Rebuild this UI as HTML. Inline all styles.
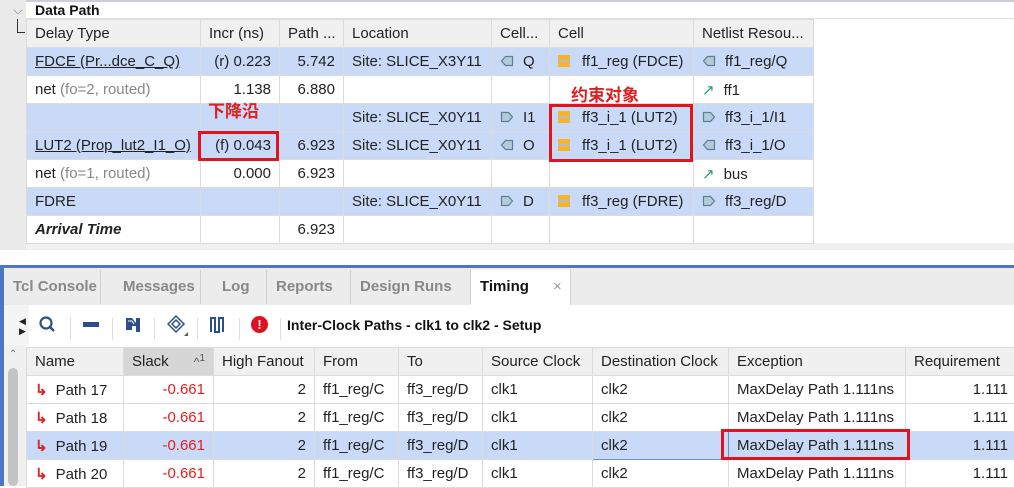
<!DOCTYPE html>
<html><head><style>
*{margin:0;padding:0;box-sizing:border-box}
body{width:1014px;height:486px;overflow:hidden;background:#fff;font-family:"Liberation Sans",Arial,sans-serif;font-size:15px;color:#222;position:relative}
.a{position:absolute}
table{border-collapse:collapse;position:absolute;table-layout:fixed}
td,th{border:1px solid #dcdcdc;height:28px;padding:0 8px;white-space:nowrap;overflow:hidden;font-weight:normal;text-align:left}
th{background:#f0f0f0}
.r{text-align:right}
.b td{background:#c9daf8}
.g{color:#888}
u{text-decoration:underline}
.pi{display:inline-block;vertical-align:-2px;margin-right:9px}
.ar{display:inline-block;color:#2a9a6a;margin-right:9px}
.lut{display:inline-block;width:12px;height:12px;background:linear-gradient(#f5b42a 0 40%,#bbb 40% 60%,#f5b42a 60%);vertical-align:-1px;margin-right:12px}
.red{color:#e02020}
.box{position:absolute;border:3px solid #e0141e}
.tab{position:absolute;top:270px;height:34px;line-height:34px;color:#888;font-weight:bold;font-size:15px;padding-left:9px;border-right:1px solid #d0d0d0}
.sep{position:absolute;top:318px;width:1px;height:22px;background:#ddd}
</style></head><body>
<svg width="0" height="0" style="position:absolute"><defs>
<symbol id="pin" viewBox="0 0 14 14"><path d="M1.5 2.5h7l4 4.5-4 4.5h-7z" fill="#b3cbd8" stroke="#5f7f90" stroke-width="1.2"/></symbol>
<symbol id="pout" viewBox="0 0 14 14"><path d="M12.5 2.5h-7l-4 4.5 4 4.5h7z" fill="#b3cbd8" stroke="#5f7f90" stroke-width="1.2"/></symbol>
</defs></svg>
<!-- top panel -->
<div class="a" style="left:0;top:0;width:1014px;height:250px;background:#f0f0f0"></div>
<div class="a" style="left:0;top:0;width:26px;height:250px;background:#eaeaea"></div>
<div class="a" style="left:26px;top:0;width:988px;height:19px;background:#fff;border-bottom:1px solid #ddd;border-top:2px solid #ccd"></div>
<div class="a" style="left:35px;top:2px;font-weight:bold;font-size:14px;color:#111">Data Path</div>
<div class="a" style="left:14px;top:6px;width:8px;height:8px;border-right:1px solid #999;border-bottom:1px solid #999;transform:rotate(45deg) scale(.8)"></div>
<div class="a" style="left:17px;top:19px;width:8px;height:14px;border-left:1px solid #333;border-bottom:1px solid #333"></div>
<div class="a" style="left:813px;top:19px;width:201px;height:224px;background:#fff"></div>
<div class="a" style="left:26px;top:47px;width:787px;height:196px;background:#fff"></div>
<table style="left:26px;top:19px;width:787px">
<colgroup><col style="width:174px"><col style="width:79px"><col style="width:64px"><col style="width:148px"><col style="width:58px"><col style="width:144px"><col style="width:120px"></colgroup>
<tr><th>Delay Type</th><th>Incr (ns)</th><th>Path ...</th><th>Location</th><th>Cell...</th><th>Cell</th><th>Netlist Resou...</th></tr>
<tr class="b"><td><u>FDCE (Pr...dce_C_Q)</u></td><td class="r">(r) 0.223</td><td class="r">5.742</td><td>Site: SLICE_X3Y11</td><td><svg class="pi" width="14" height="14"><use href="#pout"/></svg>Q</td><td><span class="lut"></span>ff1_reg (FDCE)</td><td><svg class="pi" width="14" height="14"><use href="#pout"/></svg>ff1_reg/Q</td></tr>
<tr><td>net <span class="g">(fo=2, routed)</span></td><td class="r">1.138</td><td class="r">6.880</td><td></td><td></td><td></td><td><span class="ar">&#8599;</span>ff1</td></tr>
<tr class="b"><td></td><td></td><td></td><td>Site: SLICE_X0Y11</td><td><svg class="pi" width="14" height="14"><use href="#pin"/></svg>I1</td><td><span class="lut"></span>ff3_i_1 (LUT2)</td><td><svg class="pi" width="14" height="14"><use href="#pin"/></svg>ff3_i_1/I1</td></tr>
<tr class="b"><td><u>LUT2 (Prop_lut2_I1_O)</u></td><td class="r">(f) 0.043</td><td class="r">6.923</td><td>Site: SLICE_X0Y11</td><td><svg class="pi" width="14" height="14"><use href="#pout"/></svg>O</td><td><span class="lut"></span>ff3_i_1 (LUT2)</td><td><svg class="pi" width="14" height="14"><use href="#pout"/></svg>ff3_i_1/O</td></tr>
<tr><td>net <span class="g">(fo=1, routed)</span></td><td class="r">0.000</td><td class="r">6.923</td><td></td><td></td><td></td><td><span class="ar">&#8599;</span>bus</td></tr>
<tr class="b"><td>FDRE</td><td></td><td></td><td>Site: SLICE_X0Y11</td><td><svg class="pi" width="14" height="14"><use href="#pin"/></svg>D</td><td><span class="lut"></span>ff3_reg (FDRE)</td><td><svg class="pi" width="14" height="14"><use href="#pin"/></svg>ff3_reg/D</td></tr>
<tr><td><b><i>Arrival Time</i></b></td><td></td><td class="r">6.923</td><td></td><td></td><td></td><td></td></tr>
</table>
<div class="a red" style="left:208px;top:99px;font-weight:bold;font-size:17px;font-family:'Noto Sans CJK SC',sans-serif;line-height:22px">下降沿</div>
<div class="a red" style="left:571px;top:83px;font-weight:bold;font-size:17px;font-family:'Noto Sans CJK SC',sans-serif;line-height:22px">约束对象</div>
<div class="box" style="left:198px;top:131px;width:81px;height:30px"></div>
<div class="box" style="left:549px;top:104px;width:144px;height:58px"></div>
<!-- bottom panel -->
<div class="a" style="left:0;top:265px;width:1014px;height:221px;border-top:3px solid #4a78c4;border-left:4px solid #4a78c4"></div>
<div class="a" style="left:4px;top:268px;width:1010px;height:37px;background:#ececec"></div>
<div class="tab" style="left:4px;width:97px">Tcl Console</div>
<div class="tab" style="left:114px;width:87px">Messages</div>
<div class="tab" style="left:213px;width:54px">Log</div>
<div class="tab" style="left:267px;width:84px">Reports</div>
<div class="tab" style="left:351px;width:120px">Design Runs</div>
<div class="tab" style="left:471px;width:100px;background:#fff;color:#111;top:270px;height:35px">Timing <span style="position:absolute;left:82px;color:#999;font-weight:normal">×</span></div>
<div class="a" style="left:4px;top:305px;width:25px;height:40px;background:#f4f4f4"></div>
<div class="a" style="left:19px;top:316px;font-size:9px;line-height:10px">&#9664;<br>&#9654;</div>
<svg class="a" style="left:38px;top:315px" width="20" height="20"><circle cx="8" cy="8" r="5.5" fill="none" stroke="#2a4f8a" stroke-width="2.2"/><line x1="12" y1="12" x2="16" y2="16" stroke="#2a4f8a" stroke-width="2.5"/></svg>
<div class="sep" style="left:70px"></div>
<div class="a" style="left:83px;top:322px;width:16px;height:5px;background:#2a4f8a"></div>
<div class="sep" style="left:112px"></div>
<svg class="a" style="left:125px;top:316px" width="18" height="18"><path d="M1 2h6l4 5v-5h4v14h-4v-6h-4v4h-6z" fill="#2a4f8a"/><path d="M3 5h4l2 3" stroke="#fff" fill="none"/></svg>
<div class="sep" style="left:154px"></div>
<svg class="a" style="left:167px;top:315px" width="22" height="22"><path d="M9 1l8 8-8 8-8-8z M9 5l4 4-4 4-4-4z" fill="none" stroke="#2a4f8a" stroke-width="1.5"/><path d="M21 17v4h-4z" fill="#555"/></svg>
<div class="sep" style="left:197px"></div>
<svg class="a" style="left:209px;top:316px" width="18" height="18"><path d="M2 16V2h4v14h4V2h4v14" fill="none" stroke="#2a4f8a" stroke-width="2"/></svg>
<div class="sep" style="left:239px"></div>
<div class="a" style="left:251px;top:316px;width:17px;height:17px;border-radius:50%;background:#e01020;color:#fff;font-weight:bold;font-size:13px;text-align:center;line-height:17px">!</div>
<div class="sep" style="left:280px"></div>
<div class="a" style="left:287px;top:317px;font-weight:bold;font-size:14px;color:#111">Inter-Clock Paths - clk1 to clk2 - Setup</div>
<div class="a" style="left:4px;top:345px;width:22px;height:141px;background:#f0f0f0"></div>
<div class="a" style="left:8px;top:368px;width:10px;height:118px;background:#c4c4c4;border-radius:5px"></div>
<div class="a" style="left:9px;top:349px;font-size:10px;color:#777">&#8963;</div>
<table style="left:26px;top:347px;width:990px">
<colgroup><col style="width:97px"><col style="width:90px"><col style="width:101px"><col style="width:84px"><col style="width:84px"><col style="width:110px"><col style="width:136px"><col style="width:177px"><col style="width:111px"></colgroup>
<tr><th>Name</th><th style="background:#d6d6d6">Slack <span style="float:right;font-size:12px;color:#555">^<sup>1</sup></span></th><th>High Fanout</th><th>From</th><th>To</th><th>Source Clock</th><th>Destination Clock</th><th>Exception</th><th>Requirement</th></tr>
<tr><td><span class="red" style="font-weight:bold;margin-right:8px">&#8627;</span>Path 17</td><td class="r red">-0.661</td><td class="r">2</td><td>ff1_reg/C</td><td>ff3_reg/D</td><td>clk1</td><td>clk2</td><td>MaxDelay Path 1.111ns</td><td class="r">1.111</td></tr>
<tr><td><span class="red" style="font-weight:bold;margin-right:8px">&#8627;</span>Path 18</td><td class="r red">-0.661</td><td class="r">2</td><td>ff1_reg/C</td><td>ff3_reg/D</td><td>clk1</td><td>clk2</td><td>MaxDelay Path 1.111ns</td><td class="r">1.111</td></tr>
<tr class="b"><td><span class="red" style="font-weight:bold;margin-right:8px">&#8627;</span>Path 19</td><td class="r red">-0.661</td><td class="r">2</td><td>ff1_reg/C</td><td>ff3_reg/D</td><td>clk1</td><td style="border:1px solid #6a8fc0">clk2</td><td>MaxDelay Path 1.111ns</td><td class="r">1.111</td></tr>
<tr><td><span class="red" style="font-weight:bold;margin-right:8px">&#8627;</span>Path 20</td><td class="r red">-0.661</td><td class="r">2</td><td>ff1_reg/C</td><td>ff3_reg/D</td><td>clk1</td><td>clk2</td><td>MaxDelay Path 1.111ns</td><td class="r">1.111</td></tr>
</table>
<div class="box" style="left:721px;top:429px;width:189px;height:31px"></div>
</body></html>
